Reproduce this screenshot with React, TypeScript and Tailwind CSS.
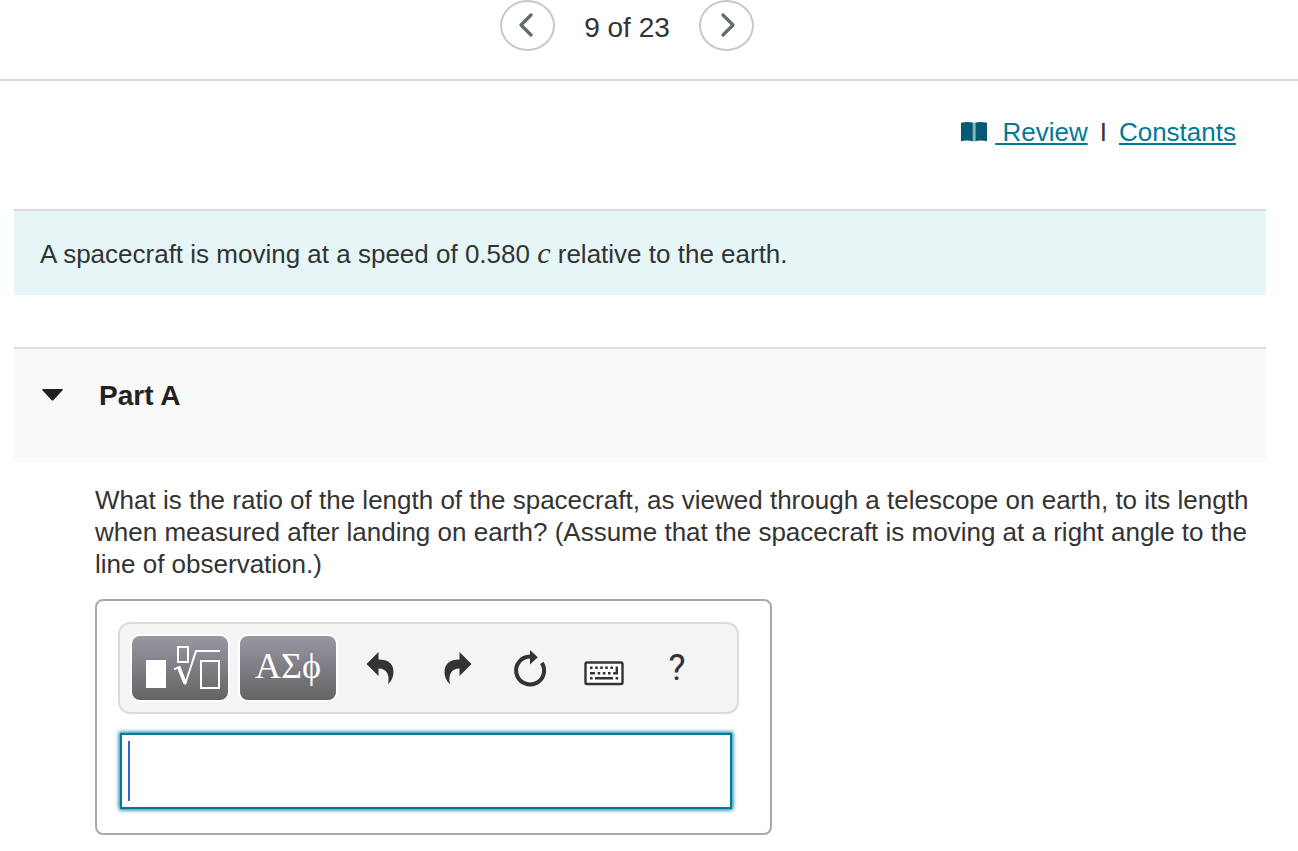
import { useState } from "react";
import type { ReactNode } from "react";

function NavButton({ label, path }: { label: string; path: string }) {
  return (
    <button
      type="button"
      aria-label={label}
      className="flex h-[51px] w-[55px] items-center justify-center rounded-[50%] border-2 border-[#c8c8c8] bg-white"
    >
      <svg viewBox="0 0 24 26" className="h-[26px] w-6" fill="none" stroke="#626b6b" strokeWidth="3.2" strokeLinecap="round" strokeLinejoin="round">
        <path d={path} />
      </svg>
    </button>
  );
}

function ToolButton({ label, children }: { label: string; children: ReactNode }) {
  return (
    <button
      type="button"
      aria-label={label}
      className="flex h-16 w-[74px] items-center justify-center text-[#333333]"
    >
      {children}
    </button>
  );
}

function BookIcon() {
  return (
    <svg viewBox="0 0 26 20" className="h-5 w-[26px]" aria-hidden="true">
      <path d="M0 .8C4 -.2 9 -.2 12.4 .8V19.4C9 18.4 4 18.4 0 19.2Z" fill="#045b73" />
      <path d="M26 .8C22 -.2 17 -.2 13.6 .8V19.4C17 18.4 22 18.4 26 19.2Z" fill="#045b73" />
      <path d="M12.2 1V19M14.2 1V19" stroke="#7fadb9" strokeWidth="1" />
    </svg>
  );
}

function TemplatesIcon() {
  return (
    <svg viewBox="0 0 96 64" className="h-16 w-24" fill="none" stroke="white">
      <rect x="14" y="24" width="20" height="28" fill="white" stroke="none" />
      <rect x="46" y="11" width="10" height="15" strokeWidth="2" />
      <path d="M42 33.5L46.5 31" strokeWidth="2" />
      <path d="M46.5 30.5L53 47" strokeWidth="3.6" />
      <path d="M53 48.5L64 15H88" strokeWidth="2" />
      <rect x="69" y="25" width="18" height="27" strokeWidth="2" />
    </svg>
  );
}

function UndoIcon() {
  return (
    <svg viewBox="0 0 44 44" className="size-11" fill="currentColor">
      <path d="M7.5 18L19.5 6V13.5C29.5 13.5 34.5 18 34.5 26C34.5 31 32.5 35 29 38.3C31 29 28 22.5 19.5 22.5V30Z" />
    </svg>
  );
}

function RedoIcon() {
  return (
    <svg viewBox="0 0 44 44" className="size-11" fill="currentColor">
      <path d="M38.5 18L26.5 6V13.5C16.5 13.5 11.5 18 11.5 26C11.5 31 13.5 35 17 38.3C15 29 18 22.5 26.5 22.5V30Z" />
    </svg>
  );
}

function ResetIcon() {
  return (
    <svg viewBox="0 0 44 44" className="size-11">
      <path d="M23 10.5A14 14 0 1 0 34.8 16.8" fill="none" stroke="currentColor" strokeWidth="4" />
      <path d="M23 4L30.8 11.2L23 18.5Z" fill="currentColor" />
    </svg>
  );
}

function KeyboardIcon() {
  return (
    <svg viewBox="0 0 44 44" className="size-11" fill="currentColor">
      <rect x="4.5" y="16.5" width="37" height="21.5" rx="1.5" fill="white" stroke="currentColor" strokeWidth="2.4" />
      <path d="M9 20.5h2.6v2.6H9zM14.2 20.5h2.6v2.6h-2.6zM19.2 20.5h2.6v2.6h-2.6zM24.2 20.5h2.6v2.6h-2.6zM29.4 20.5h2.6v2.6h-2.6z" />
      <path d="M9 26h5v2.6H9zM16.6 26h2.6v2.6h-2.6zM21.8 26h2.6v2.6h-2.6zM27 26h2.6v2.6H27z" />
      <path d="M34.6 20.5H37v8.1h-4.8V26h2.4z" />
      <path d="M9 31h2.6v2.6H9zM14 31h18v2.6H14zM34.6 31h2.6v2.6h-2.6z" />
    </svg>
  );
}

export default function App() {
  const [answer, setAnswer] = useState("");
  const [open, setOpen] = useState(true);

  return (
    <div className="min-h-screen bg-white font-['Liberation_Sans',Arial,sans-serif] text-[26px] leading-8 text-[#333333]">
      <header className="flex items-start justify-center gap-[29px] border-b-2 border-[#dcdcdc] pr-11 pb-7">
        <NavButton label="Previous item" path="M15 2L5 12L15 22" />
        <span className="pt-3 text-[28px]">9 of 23</span>
        <NavButton label="Next item" path="M9 2L19 12L9 22" />
      </header>

      <main className="pr-8 pl-3.5">
        <div className="flex items-center justify-end pt-[35px] pr-[30px] pb-[61px]">
          <BookIcon />
          <a href="#review" className="ml-2 text-[#007a99] underline decoration-2 underline-offset-2">
            &nbsp;Review
          </a>
          <span className="mx-3">I</span>
          <a href="#constants" className="text-[#007a99] underline decoration-2 underline-offset-2">
            Constants
          </a>
        </div>

        <section className="border-t-2 border-[#dcdcdc] bg-[#e6f6f7] px-[26px] pt-[26px] pb-[25px]">
          <p>
            A spacecraft is moving at a speed of 0.580{" "}
            <i className="font-['Liberation_Serif',serif] text-[30px]">c</i> relative to the earth.
          </p>
        </section>

        <section className="mt-[52px]">
          <h2 className="border-t-2 border-[#dcdcdc] bg-[#f9f9f9] px-7 pt-[31px] pb-[50px] text-[28px] font-bold text-[#222222]">
            <button
              type="button"
              aria-expanded={open}
              onClick={() => setOpen(!open)}
              className="flex items-center gap-9"
            >
              <svg viewBox="0 0 21 14" className="h-3.5 w-[21px]" fill="currentColor" aria-hidden="true">
                <path d="M1 0H20Q21.4 .4 20.4 1.6L11.6 11Q10.5 12 9.4 11L.6 1.6Q-.4 .4 1 0Z" />
              </svg>
              Part A
            </button>
          </h2>

          {open && (
            <div className="pt-[22px] pl-[81px]">
              <p>
                What is the ratio of the length of the spacecraft, as viewed through a telescope on earth, to its length
                when measured after landing on earth? (Assume that the spacecraft is moving at a right angle to the line
                of observation.)
              </p>

              <div className="mt-[19px] w-[677px] max-w-full rounded-lg border-2 border-[#a9a9a9] pt-[21px] pr-[31px] pb-6 pl-[21px]">
                <div className="flex items-center rounded-xl border-2 border-[#dcdcdc] bg-[#f4f4f4] p-3">
                  <button
                    type="button"
                    aria-label="Templates"
                    className="rounded-lg bg-linear-to-b from-[#9a97a3] to-[#646464] ring-2 ring-white"
                  >
                    <TemplatesIcon />
                  </button>
                  <button
                    type="button"
                    className="mr-2 ml-3 h-16 w-24 rounded-lg bg-linear-to-b from-[#9a97a3] to-[#646464] pb-1 font-['Liberation_Serif',serif] text-[36px] text-white ring-2 ring-white"
                  >
                    ΑΣϕ
                  </button>
                  <ToolButton label="Undo">
                    <UndoIcon />
                  </ToolButton>
                  <ToolButton label="Redo">
                    <RedoIcon />
                  </ToolButton>
                  <ToolButton label="Reset">
                    <ResetIcon />
                  </ToolButton>
                  <ToolButton label="Keyboard shortcuts">
                    <KeyboardIcon />
                  </ToolButton>
                  <ToolButton label="Help">
                    <span className="font-[Roboto,sans-serif] text-[36px]">?</span>
                  </ToolButton>
                </div>

                <div className="relative mt-[19px] mr-[7px] ml-0.5">
                  <input
                    type="text"
                    aria-label="Answer"
                    value={answer}
                    onChange={(e) => setAnswer(e.target.value)}
                    className="block h-[76px] w-full border-2 border-[#007a99] bg-white px-2 shadow-[0_0_4px_1px_#007a99] outline-none"
                  />
                  {answer === "" && (
                    <span className="pointer-events-none absolute inset-y-2 left-2 w-0.5 bg-[#2d66d9]" />
                  )}
                </div>
              </div>
            </div>
          )}
        </section>
      </main>
    </div>
  );
}
